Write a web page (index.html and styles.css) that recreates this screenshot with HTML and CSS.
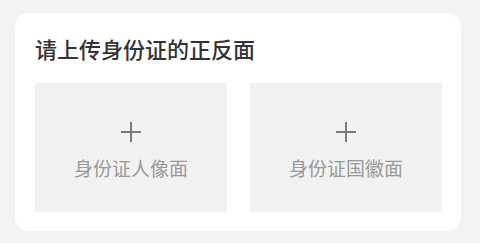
FILE: index.html
```html
<!DOCTYPE html>
<html lang="zh-CN">
<head>
    <meta charset="UTF-8">
    <meta name="viewport" content="width=device-width, initial-scale=1.0">
    <title>身份证上传</title>
    <link rel="stylesheet" href="styles.css">
</head>
<body>
    <main class="page">
        <!-- ID card upload -->
        <section class="upload-card">
            <h2 class="upload-title">请上传身份证的正反面</h2>
            <div class="upload-grid">
                <button type="button" class="upload-box" aria-label="上传身份证人像面">
                    <svg class="upload-plus" width="22" height="22" viewBox="0 0 22 22" aria-hidden="true">
                        <path d="M11 1v20M1 11h20" stroke="#7a7a7a" stroke-width="2" fill="none"/>
                    </svg>
                    <span class="upload-label">身份证人像面</span>
                </button>
                <button type="button" class="upload-box" aria-label="上传身份证国徽面">
                    <svg class="upload-plus" width="22" height="22" viewBox="0 0 22 22" aria-hidden="true">
                        <path d="M11 1v20M1 11h20" stroke="#7a7a7a" stroke-width="2" fill="none"/>
                    </svg>
                    <span class="upload-label">身份证国徽面</span>
                </button>
            </div>
        </section>
    </main>
</body>
</html>
```

FILE: styles.css
```css
:root {
    --page-bg: #f3f3f3;
    --card-bg: #ffffff;
    --box-bg: #f2f2f2;
    --title-text: #333333;
    --hint-text: #999999;
}

body {
    margin: 0;
    padding: 0;
    background-color: var(--page-bg);
    font-family: "Noto Sans CJK SC", "Noto Sans", sans-serif;
}

.page {
    padding: 13px 19px 12px 15px;
}

.upload-card {
    background-color: var(--card-bg);
    border-radius: 14px;
    padding: 20px 19px 19px 20px;
}

.upload-title {
    margin: 0 0 20px;
    font-size: 22px;
    line-height: 30px;
    font-weight: 500;
    color: var(--title-text);
}

.upload-grid {
    display: grid;
    grid-template-columns: 192px 192px;
    column-gap: 23px;
}

.upload-box {
    display: flex;
    flex-direction: column;
    align-items: center;
    justify-content: center;
    height: 129px;
    padding: 4px 0 0;
    border: none;
    background-color: var(--box-bg);
    font-family: inherit;
    cursor: pointer;
}

.upload-plus {
    display: block;
    margin-bottom: 14px;
}

.upload-label {
    font-size: 19px;
    line-height: 22px;
    color: var(--hint-text);
}
```
